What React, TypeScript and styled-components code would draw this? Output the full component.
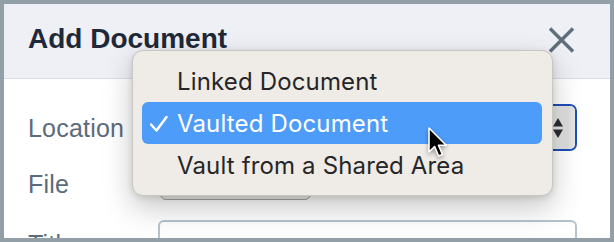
import React from "react";
import styled, { createGlobalStyle } from "styled-components";

const GlobalStyle = createGlobalStyle`
  html, body { margin: 0; padding: 0; background: #ffffff; }
  * { box-sizing: border-box; }
`;

const Frame = styled.div`
  position: relative;
  width: 614px;
  height: 242px;
  border: 4px solid #939fa7;
  overflow: hidden;
  background: #ffffff;
  font-family: "Liberation Sans", Arial, sans-serif;
`;

const Header = styled.header`
  height: 75px;
  display: flex;
  align-items: flex-start;
  justify-content: space-between;
  padding: 19px 35px 0 24px;
  background: #eef0f6;
  border-bottom: 1px solid #d9dde3;
`;

const Title = styled.h2`
  margin: 0;
  font-size: 28px;
  line-height: 32px;
  font-weight: 700;
  color: #1f2937;
`;

const CloseButton = styled.button`
  margin-top: 4px;
  padding: 0;
  border: 0;
  background: transparent;
  width: 27px;
  height: 26px;
  display: flex;
`;

const Body = styled.div`
  display: grid;
  grid-template-columns: 130px 1fr;
  align-items: center;
  padding: 25px 33px 0 24px;
`;

const Label = styled.label<{ $gap?: number }>`
  margin-top: ${(p) => p.$gap ?? 0}px;
  font-size: 25px;
  line-height: 30px;
  color: #5b6b7b;
  letter-spacing: 0.2px;
`;

const Cell = styled.div<{ $gap?: number }>`
  margin-top: ${(p) => p.$gap ?? 0}px;
  display: flex;
`;

const SelectBox = styled.div`
  width: 100%;
  height: 47px;
  border: 2px solid #1c4fb3;
  border-radius: 7px;
  background: #ffffff;
  display: flex;
  justify-content: flex-end;
  overflow: hidden;
`;

const Stepper = styled.div`
  width: 24px;
  height: 100%;
  display: flex;
  align-items: center;
  justify-content: flex-start;
  padding-left: 1px;
  background: linear-gradient(to right, #ececec, #dcdcdc 70%, #e8e8e8);
`;

const FileButton = styled.div`
  margin-left: 2px;
  width: 151px;
  height: 32px;
  border: 1px solid #a6a6a6;
  border-radius: 6px;
  background: #efefef;
`;

const TextInput = styled.div`
  width: 100%;
  height: 47px;
  border: 2px solid #b6c3cf;
  border-radius: 6px;
  background: #ffffff;
`;

const Menu = styled.div`
  position: absolute;
  left: 128px;
  top: 46px;
  width: 421px;
  height: 146px;
  padding: 9px 10px 9px 9px;
  background: #efebe6;
  border: 1px solid #cac6c1;
  border-radius: 11px;
  box-shadow: 0 12px 30px rgba(0, 0, 0, 0.22), 0 2px 6px rgba(0, 0, 0, 0.12);
  display: flex;
  flex-direction: column;
`;

const MenuItem = styled.div<{ $active?: boolean }>`
  position: relative;
  height: 42px;
  display: flex;
  align-items: center;
  padding-left: 35px;
  border-radius: 6px;
  font-family: "Inter", "Liberation Sans", sans-serif;
  font-size: 24px;
  letter-spacing: 0.15px;
  color: ${(p) => (p.$active ? "#ffffff" : "#262626")};
  background: ${(p) => (p.$active ? "#4e9cfa" : "transparent")};
`;

const Check = styled.svg`
  position: absolute;
  left: 8px;
  top: 14px;
`;

const Cursor = styled.svg`
  position: absolute;
  left: 423px;
  top: 122px;
  filter: drop-shadow(0 2px 2px rgba(0, 0, 0, 0.35));
`;

export default function App() {
  return (
    <>
      <GlobalStyle />
      <Frame>
        <Header>
          <Title>Add Document</Title>
          <CloseButton aria-label="Close">
            <svg width="27" height="26" viewBox="0 0 27 26">
              <path d="M2 1.5 L25 24.5 M25 1.5 L2 24.5" stroke="#5e6e7b" strokeWidth="3.4" strokeLinecap="butt" />
            </svg>
          </CloseButton>
        </Header>
        <Body>
          <Label>Location</Label>
          <Cell>
            <SelectBox>
              <Stepper>
                <svg width="12" height="22" viewBox="0 0 12 22">
                  <path d="M1 9.5 L6 1 L11 9.5 Z" fill="#2a2f36" />
                  <path d="M1 12.5 L11 12.5 L6 21 Z" fill="#2a2f36" />
                </svg>
              </Stepper>
            </SelectBox>
          </Cell>
          <Label $gap={17}>File</Label>
          <Cell $gap={17}>
            <FileButton />
          </Cell>
          <Label $gap={20}>Title</Label>
          <Cell $gap={20}>
            <TextInput />
          </Cell>
        </Body>
        <Menu>
          <MenuItem>Linked Document</MenuItem>
          <MenuItem $active>
            <Check width="18" height="16" viewBox="0 0 18 16">
              <path d="M1 8.5 L6.5 14.5 L16.5 1" fill="none" stroke="#ffffff" strokeWidth="2.5" strokeLinecap="round" strokeLinejoin="round" />
            </Check>
            Vaulted Document
          </MenuItem>
          <MenuItem>Vault from a Shared Area</MenuItem>
        </Menu>
        <Cursor width="22" height="34" viewBox="0 0 22 34">
          <path
            d="M2 2 L2 26 L7.6 20.6 L11.6 30 L15.4 28.4 L11.5 19.2 L19.2 19.2 Z"
            fill="#000000"
            stroke="#ffffff"
            strokeWidth="1.6"
            strokeLinejoin="round"
          />
        </Cursor>
      </Frame>
    </>
  );
}
